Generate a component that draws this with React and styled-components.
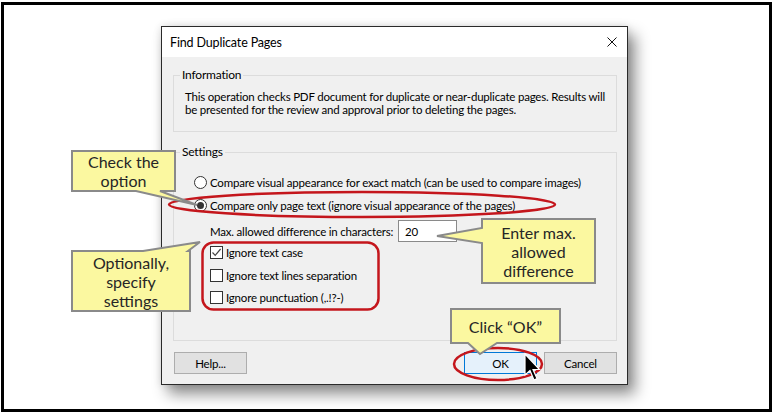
import React from "react";
import styled, { createGlobalStyle } from "styled-components";

const GlobalStyle = createGlobalStyle`
  html, body { margin: 0; padding: 0; background: #fff; }
  * { box-sizing: border-box; }
`;

/* page coords -> frame padding-box coords (frame inner starts at 4,5) */
const OX = 4;
const OY = 5;

const Frame = styled.div`
  position: relative;
  width: 771px;
  height: 410px;
  margin: 2px 0 0 1px;
  border: 3px solid #000;
  background: #fff;
  padding: 21px 0 0 157px;
  overflow: hidden;
`;

const Dialog = styled.div`
  width: 467px;
  height: 359px;
  border: 1px solid #2a2a2a;
  background: #f0f0f0;
  display: flex;
  flex-direction: column;
  box-shadow: 7px 9px 14px rgba(0, 0, 0, 0.45), 0 0 8px rgba(0, 0, 0, 0.12);
  font-family: Lato, "Noto Sans", sans-serif;
  font-size: 11.5px;
  letter-spacing: -0.2px;
  color: #000;
`;

const TitleBar = styled.div`
  height: 30px;
  flex: none;
  background: #fff;
  display: flex;
  align-items: center;
  justify-content: space-between;
  padding: 0 10px 0 8px;
  font-size: 12.5px;
  letter-spacing: -0.15px;
`;

const CloseIcon = styled.svg`
  width: 10px;
  height: 10px;
  display: block;
`;

const Body = styled.div`
  flex: 1;
  display: flex;
  flex-direction: column;
  padding: 11px 10px 10px 11px;
`;

const Group = styled.fieldset`
  margin: ${(p) => (p.$first ? "0" : "13px 0 0 0")};
  padding: 0;
  border: 1px solid #dcdcdc;
  min-width: 0;
  flex: ${(p) => (p.$grow ? "1" : "none")};
`;

const Legend = styled.legend`
  padding: 0 2px;
  margin-left: 6px;
  line-height: 14px;
  font-size: 12px;
`;

const GroupContent = styled.div`
  padding: ${(p) => p.$pad};
  display: flex;
  flex-direction: column;
`;

const InfoText = styled.p`
  margin: 0;
  line-height: 13px;
  white-space: nowrap;
`;

const OptionRow = styled.label`
  display: flex;
  align-items: center;
  height: ${(p) => (p.$tall ? "22px" : "16px")};
  margin-top: ${(p) => p.$mt || 0}px;
  margin-left: ${(p) => p.$ml || 0}px;
  gap: 3px;
  white-space: nowrap;
`;

const Radio = styled.span`
  width: 13px;
  height: 13px;
  border-radius: 50%;
  border: 1px solid #333;
  background: #fff;
  display: flex;
  align-items: center;
  justify-content: center;
  flex: none;
  &::after {
    content: "";
    width: 7px;
    height: 7px;
    border-radius: 50%;
    background: #333;
    display: ${(p) => (p.$on ? "block" : "none")};
  }
`;

const Box = styled.span`
  width: 13px;
  height: 13px;
  border: 1px solid #333;
  background: #fff;
  flex: none;
  display: flex;
  align-items: center;
  justify-content: center;
`;

const Label = styled.span`
  width: ${(p) => (p.$w ? `${p.$w}px` : "auto")};
  flex: none;
`;

const NumberBox = styled.div`
  width: 59px;
  height: 22px;
  border: 1px solid #8a8a8a;
  background: #fff;
  padding: 0 6px;
  display: flex;
  align-items: center;
`;

const ButtonRow = styled.div`
  margin-top: 11px;
  display: flex;
  gap: 7px;
  height: 22px;
  flex: none;
`;

const Spacer = styled.div`
  flex: 1;
`;

const Button = styled.div`
  width: 73px;
  height: 22px;
  border: 1px solid ${(p) => (p.$primary ? "#0078d7" : "#adadad")};
  background: ${(p) => (p.$primary ? "#e5f1fb" : "#e1e1e1")};
  display: flex;
  align-items: center;
  justify-content: center;
  margin-left: ${(p) => (p.$left ? "1px" : "0")};
`;

/* ---------- overlays ---------- */

const Callout = styled.div`
  position: absolute;
  left: ${(p) => p.$x - OX}px;
  top: ${(p) => p.$y - OY}px;
  width: ${(p) => p.$w}px;
  height: ${(p) => p.$h}px;
  display: flex;
  flex-direction: column;
  align-items: center;
  justify-content: center;
  font-family: Lato, "Open Sans", sans-serif;
  font-size: 16px;
  line-height: 19px;
  color: #262626;
  text-align: center;
  z-index: 3;
  isolation: isolate;
`;

const CalloutShape = styled.svg`
  position: absolute;
  left: 0;
  top: 0;
  overflow: visible;
  z-index: -1;
`;

const Mark = styled.svg`
  position: absolute;
  left: ${(p) => p.$x - OX}px;
  top: ${(p) => p.$y - OY}px;
  overflow: visible;
  z-index: ${(p) => p.$z || 2};
`;

function CalloutBubble({ x, y, w, h, pointer, lines }) {
  let d;
  const [a, b] = pointer.base;
  const [tx, ty] = pointer.tip;
  if (pointer.side === "bottom") {
    d = `M0 0 H${w} V${h} H${b} L${tx} ${ty} L${a} ${h} H0 Z`;
  } else if (pointer.side === "top") {
    d = `M0 0 H${a} L${tx} ${ty} L${b} 0 H${w} V${h} H0 Z`;
  } else {
    d = `M0 0 H${w} V${h} H0 V${b} L${tx} ${ty} L0 ${a} Z`;
  }
  return (
    <Callout $x={x} $y={y} $w={w} $h={h}>
      <CalloutShape width={w} height={h}>
        <path d={d} fill="#fbf8a0" stroke="#8a8a8a" strokeWidth="2" strokeLinejoin="miter" />
      </CalloutShape>
      {lines.map((l) => (
        <span key={l}>{l}</span>
      ))}
    </Callout>
  );
}

function RedEllipse({ cx, cy, rx, ry }) {
  return (
    <Mark $x={cx - rx - 3} $y={cy - ry - 3} width={rx * 2 + 6} height={ry * 2 + 6}>
      <ellipse cx={rx + 3} cy={ry + 3} rx={rx} ry={ry} fill="none" stroke="#c4161c" strokeWidth="2.5" />
    </Mark>
  );
}

export default function App() {
  return (
    <>
      <GlobalStyle />
      <Frame>
        <Dialog>
          <TitleBar>
            <span>Find Duplicate Pages</span>
            <CloseIcon viewBox="0 0 10 10">
              <path d="M0.5 0.5 L9.5 9.5 M9.5 0.5 L0.5 9.5" stroke="#111" strokeWidth="1" />
            </CloseIcon>
          </TitleBar>
          <Body>
            <Group $first>
              <Legend>Information</Legend>
              <GroupContent $pad="8px 10px 15px 11px">
                <InfoText>
                  This operation checks PDF document for duplicate or near-duplicate pages. Results will
                  <br />
                  be presented for the review and approval prior to deleting the pages.
                </InfoText>
              </GroupContent>
            </Group>
            <Group $grow>
              <Legend>Settings</Legend>
              <GroupContent $pad="15px 10px 0 20px">
                <OptionRow>
                  <Radio />
                  <Label>Compare visual appearance for exact match (can be used to compare images)</Label>
                </OptionRow>
                <OptionRow $mt={7}>
                  <Radio $on />
                  <Label>Compare only page text (ignore visual appearance of the pages)</Label>
                </OptionRow>
                <OptionRow $tall $mt={7} $ml={16}>
                  <Label $w={185}>Max. allowed difference in characters:</Label>
                  <NumberBox>20</NumberBox>
                </OptionRow>
                <OptionRow $mt={2} $ml={16}>
                  <Box>
                    <svg width="11" height="11" viewBox="0 0 11 11">
                      <path d="M1.5 5.5 L4.2 8.3 L9.6 2" fill="none" stroke="#444" strokeWidth="1.2" />
                    </svg>
                  </Box>
                  <Label>Ignore text case</Label>
                </OptionRow>
                <OptionRow $mt={7} $ml={16}>
                  <Box />
                  <Label>Ignore text lines separation</Label>
                </OptionRow>
                <OptionRow $mt={6} $ml={16}>
                  <Box />
                  <Label>Ignore punctuation (,.!?-)</Label>
                </OptionRow>
              </GroupContent>
            </Group>
            <ButtonRow>
              <Button $left>Help...</Button>
              <Spacer />
              <Button $primary>OK</Button>
              <Button>Cancel</Button>
            </ButtonRow>
          </Body>
        </Dialog>

        <RedEllipse cx={362} cy={204} rx={193} ry={12.5} />
        <Mark $x={201} $y={241} width={180} height={71}>
          <rect x="1.5" y="1.5" width="176" height="67" rx="11" ry="11" fill="none" stroke="#c4161c" strokeWidth="2.5" />
        </Mark>
        <RedEllipse cx={497.5} cy={363.5} rx={44} ry={16} />

        <CalloutBubble
          x={72}
          y={151}
          w={103}
          h={40}
          pointer={{ side: "bottom", base: [64, 88], tip: [125, 54] }}
          lines={["Check the", "option"]}
        />
        <CalloutBubble
          x={72}
          y={251}
          w={118}
          h={60}
          pointer={{ side: "top", base: [71, 116], tip: [128, -9] }}
          lines={["Optionally,", "specify", "settings"]}
        />
        <CalloutBubble
          x={482}
          y={219}
          w={113}
          h={64}
          pointer={{ side: "left", base: [9, 24], tip: [-45, 17] }}
          lines={["Enter max.", "allowed", "difference"]}
        />
        <CalloutBubble
          x={451}
          y={309}
          w={109}
          h={34}
          pointer={{ side: "bottom", base: [17, 46], tip: [29, 45] }}
          lines={["Click \u201COK\u201D"]}
        />

        <Mark $x={524} $y={353} $z={4} width={16} height={30} viewBox="0 0 16 30">
          <path
            d="M1 1 L1 22 L6 17.5 L10 27 L13 25.6 L9 16.5 L15.5 16.5 Z"
            fill="#000"
            stroke="#fff"
            strokeWidth="1.2"
            strokeLinejoin="miter"
          />
        </Mark>
      </Frame>
    </>
  );
}
